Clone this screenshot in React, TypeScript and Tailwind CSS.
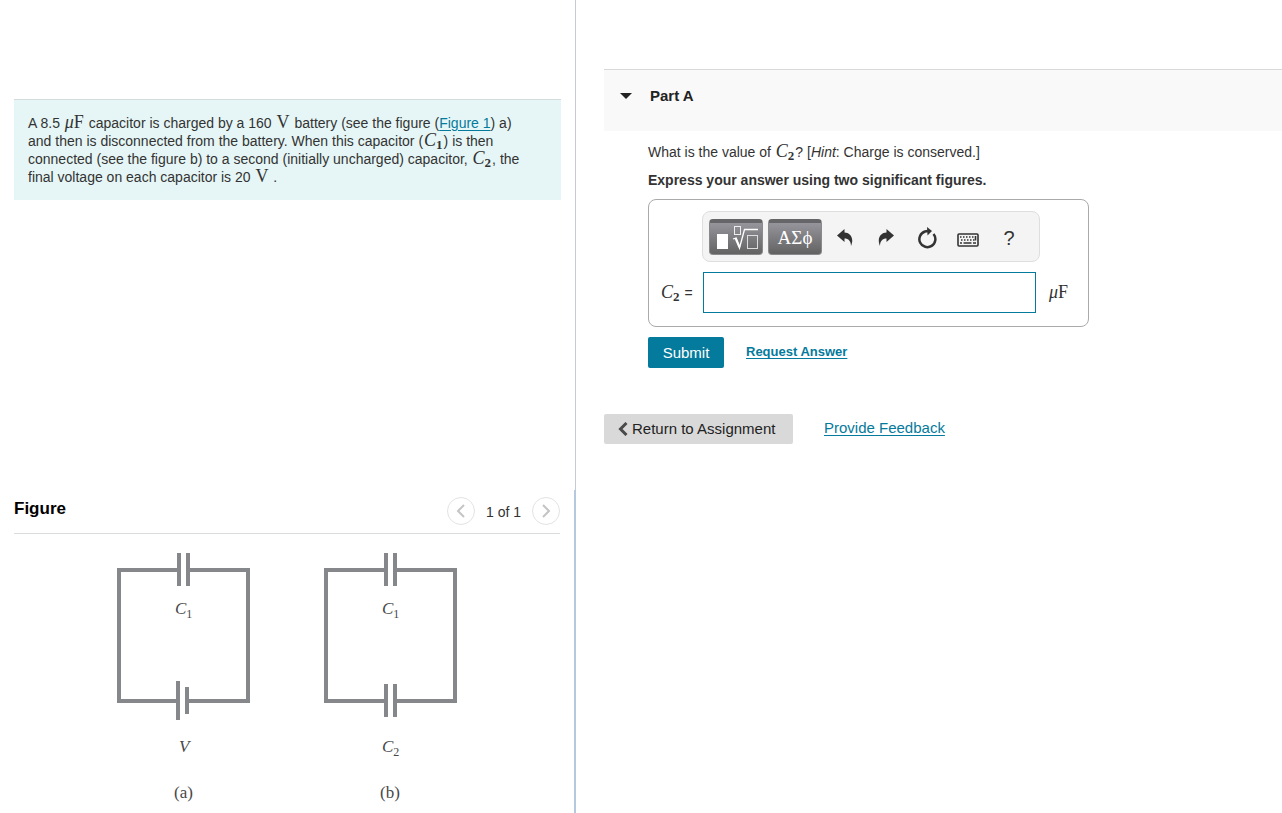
import type { ReactNode } from 'react'

function Variable({ name, sub }: { name: string; sub?: string }) {
  return (
    <span className="px-px font-['Liberation_Serif',serif] text-[18px] leading-[0]">
      <i>{name}</i>
      {sub && <sub className="bottom-[-3px] text-[13px] font-bold">{sub}</sub>}
    </span>
  )
}

function Unit({ children }: { children: ReactNode }) {
  return (
    <span className="px-px font-['Liberation_Serif',serif] text-[18px] leading-[0]">{children}</span>
  )
}

function Problem() {
  return (
    <section className="mx-3.5 mt-[99px] border-t border-[#d5dcdc] bg-[#e6f6f6] px-3.5 py-3.5 text-sm leading-[18px]">
      <p>
        A 8.5 <Unit><i>μ</i>F</Unit> capacitor is charged by a 160 <Unit>V</Unit> battery (see the
        figure (
        <a href="#figure" className="text-[#047a9c] underline underline-offset-2">
          Figure 1
        </a>
        ) a)
        <br />
        and then is disconnected from the battery. When this capacitor (
        <Variable name="C" sub="1" />) is then
        <br />
        connected (see the figure b) to a second (initially uncharged) capacitor,{' '}
        <Variable name="C" sub="2" />, the
        <br />
        final voltage on each capacitor is 20 <Unit>V</Unit> .
      </p>
    </section>
  )
}

function PagerButton({ label, points }: { label: string; points: string }) {
  return (
    <button
      type="button"
      aria-label={label}
      className="flex size-7 items-center justify-center rounded-full border border-[#e3e3e3]"
    >
      <svg width="12" height="14" viewBox="0 0 12 14" fill="none" stroke="#c4c4c4" strokeWidth="2">
        <polyline points={points} />
      </svg>
    </button>
  )
}

function CircuitLabel({ x, y, name, sub }: { x: number; y: number; name: string; sub?: string }) {
  return (
    <text x={x} y={y} fontSize="17" fontStyle="italic">
      {name}
      {sub && (
        <tspan dy="4" fontSize="12" fontStyle="normal">
          {sub}
        </tspan>
      )}
    </text>
  )
}

function Circuits() {
  return (
    <svg
      width="546"
      height="270"
      viewBox="14 540 546 270"
      role="img"
      aria-label="Circuits a and b"
      className="mt-1.5 max-w-full font-['Liberation_Serif',serif]"
    >
      <g fill="none" stroke="#85878a" strokeWidth="4">
        {/* (a) capacitor on a battery */}
        <path d="M178 570H119V701H178M188 570H248V701H188" />
        <path d="M179 553V586M188 553V586M178 681V720M187 687V714" />
        {/* (b) two capacitors */}
        <path d="M385 570H326V701H385M395 570H455V701H395" />
        <path d="M386 553V586M395 553V586M386 684V717M395 684V717" />
      </g>
      <g fill="#48484a">
        <CircuitLabel x={175} y={614} name="C" sub="1" />
        <CircuitLabel x={179} y={752} name="V" />
        <text x="174" y="798" fontSize="17">(a)</text>
        <CircuitLabel x={382} y={614} name="C" sub="1" />
        <CircuitLabel x={382} y={752} name="C" sub="2" />
        <text x="380" y="798" fontSize="17">(b)</text>
      </g>
    </svg>
  )
}

function Figure() {
  return (
    <section id="figure" className="grow border-r-2 border-[#b6c8de] px-3.5">
      <header className="flex h-11 items-center border-b border-[#d9dddd]">
        <h2 className="grow pb-1.5 text-[17px] font-bold text-black">Figure</h2>
        <div className="flex items-center gap-[11px] pb-0.5">
          <PagerButton label="Previous figure" points="9,1 3,7 9,13" />
          <span className="pt-0.5 text-sm">1 of 1</span>
          <PagerButton label="Next figure" points="3,1 9,7 3,13" />
        </div>
      </header>
      <Circuits />
    </section>
  )
}

function DarkButton({ label, children }: { label: string; children: ReactNode }) {
  return (
    <button
      type="button"
      aria-label={label}
      className="flex h-9 w-[54px] items-center justify-center rounded border border-t-4 border-[#8a8a8c] border-t-[#666668] bg-linear-to-b from-[#96959c] to-[#636363] text-white"
    >
      {children}
    </button>
  )
}

function ToolButton({ label, children }: { label: string; children: ReactNode }) {
  return (
    <button
      type="button"
      aria-label={label}
      className="flex h-9 w-9 items-center justify-center pt-0.5 text-[#333]"
    >
      {children}
    </button>
  )
}

const keys = [3, 6, 9, 12, 15]

function Toolbar() {
  return (
    <div className="ml-[53px] flex h-[51px] w-[338px] items-center gap-[5px] rounded-lg border border-[#dedede] bg-[#f4f4f4] px-1.5">
      <DarkButton label="Templates">
        <svg width="46" height="27" viewBox="0 0 46 27" fill="none" stroke="#fff">
          <rect x="4" y="9" width="11" height="15" fill="#fff" stroke="none" />
          <rect x="21.5" y="1.5" width="6" height="8" stroke="#eee" />
          <path d="M20 14l3-1 3.500 10 5-18.500H45" strokeWidth="1.300" />
          <path d="M22.500 13l4 9" strokeWidth="2.200" />
          <rect x="34.5" y="10.5" width="10" height="13" stroke="#ddd" />
        </svg>
      </DarkButton>
      <DarkButton label="Symbols">
        <span className="pb-0.5 font-['Liberation_Serif',serif] text-[19px] leading-none">ΑΣϕ</span>
      </DarkButton>
      <ToolButton label="Undo">
        <svg width="16" height="17" viewBox="0 0 16 17" fill="currentColor">
          <path d="M0 6.500L7.500 0V3.500C13 3.500 17.500 9 14 17C14 12 11.500 9.500 7.500 9.500V13Z" />
        </svg>
      </ToolButton>
      <ToolButton label="Redo">
        <svg width="16" height="17" viewBox="0 0 16 17" fill="currentColor">
          <path d="M16 6.500L8.500 0V3.500C3 3.500 -1.500 9 2 17C2 12 4.500 9.500 8.500 9.500V13Z" />
        </svg>
      </ToolButton>
      <ToolButton label="Reset">
        <svg width="20" height="22" viewBox="0 0 20 22" fill="none">
          <path d="M16.500 7A8 8 0 1 1 8 4.500L11 4" stroke="currentColor" strokeWidth="2.500" />
          <path d="M10 0L15 4L10.500 8.500Z" fill="currentColor" />
        </svg>
      </ToolButton>
      <ToolButton label="Keyboard shortcuts">
        <svg width="22" height="14" viewBox="0 0 22 14" fill="none" stroke="currentColor" className="mt-1">
          <rect x="1" y="1" width="20" height="12" rx="1" strokeWidth="1.600" />
          {keys.map((x) => (
            <path key={x} d={`M${x} 4h1.500M${x + 1} 7h1.500`} strokeWidth="1.500" />
          ))}
          <path d="M3 10h2M6.500 10h8M16 10h3M18.500 3v4.500" strokeWidth="1.600" />
        </svg>
      </ToolButton>
      <ToolButton label="Help">
        <span className="text-xl">?</span>
      </ToolButton>
    </div>
  )
}

function AnswerBox() {
  return (
    <div className="mt-[9px] h-32 max-w-[441px] rounded-lg border border-[#aaa] pt-[11px]">
      <Toolbar />
      <div className="mt-2.5 flex items-center pl-[11px]">
        <label htmlFor="answer" className="w-[43px] text-sm">
          <Variable name="C" sub="2" /> =
        </label>
        <input
          id="answer"
          type="text"
          className="h-[41px] w-[333px] border border-[#047a9c] bg-white px-2 outline-none"
        />
        <span className="ml-3">
          <Unit><i>μ</i>F</Unit>
        </span>
      </div>
    </div>
  )
}

function PartA() {
  return (
    <>
      <header className="flex h-[62px] border-t border-[#d9d9d9] bg-[#f9f9f9] pl-4 pt-4">
        <button type="button" className="flex h-5 items-center text-[15px] font-bold text-[#222]">
          <svg width="12" height="6" viewBox="0 0 12 6" fill="currentColor" className="mr-[18px]">
            <path d="M0 0H12L6 6Z" />
          </svg>
          Part A
        </button>
      </header>
      <div className="pl-11 text-sm">
        <p className="mt-[11px] leading-5">
          What is the value of <Variable name="C" sub="2" />? [<i>Hint</i>: Charge is conserved.]
        </p>
        <p className="mt-2 font-bold leading-5">Express your answer using two significant figures.</p>
        <AnswerBox />
        <div className="mt-2.5 flex items-center gap-[22px]">
          <button type="button" className="h-[31px] w-[76px] rounded-xs bg-[#047a9c] text-[15px] text-white">
            Submit
          </button>
          <a href="#request" className="text-[13px] font-bold text-[#047a9c] underline underline-offset-2">
            Request Answer
          </a>
        </div>
      </div>
    </>
  )
}

export default function App() {
  return (
    <div className="grid min-h-screen grid-cols-[576fr_706fr] bg-white font-['Liberation_Sans',Arial,sans-serif] text-[#333]">
      <div className="flex flex-col">
        <div className="flow-root h-[490px] border-r border-[#c5cad3]">
          <Problem />
        </div>
        <Figure />
      </div>
      <main className="pl-7 pt-[69px]">
        <PartA />
        <footer className="mt-[46px] flex items-center gap-[31px]">
          <button
            type="button"
            className="flex h-[30px] w-[189px] items-center gap-1 rounded-xs bg-[#d9d9d9] pl-3.5 text-[15px] text-[#222]"
          >
            <svg width="10" height="14" viewBox="0 0 10 14" fill="none" stroke="#4a4a4a" strokeWidth="3">
              <path d="M8.500 1L2.500 7L8.500 13" />
            </svg>
            Return to Assignment
          </button>
          <a href="#feedback" className="pb-0.5 text-[15px] text-[#047a9c] underline underline-offset-2">
            Provide Feedback
          </a>
        </footer>
      </main>
    </div>
  )
}
